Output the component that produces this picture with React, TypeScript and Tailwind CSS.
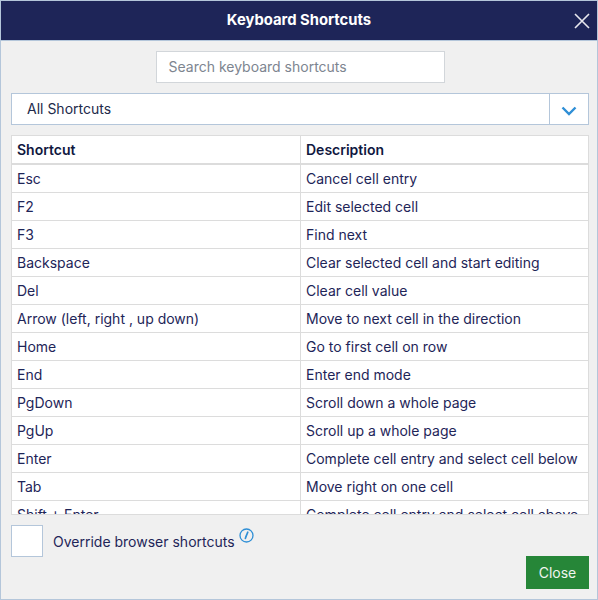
import React from "react";

const rows: [string, string][] = [
  ["Esc", "Cancel cell entry"],
  ["F2", "Edit selected cell"],
  ["F3", "Find next"],
  ["Backspace", "Clear selected cell and start editing"],
  ["Del", "Clear cell value"],
  ["Arrow (left, right , up down)", "Move to next cell in the direction"],
  ["Home", "Go to first cell on row"],
  ["End", "Enter end mode"],
  ["PgDown", "Scroll down a whole page"],
  ["PgUp", "Scroll up a whole page"],
  ["Enter", "Complete cell entry and select cell below"],
  ["Tab", "Move right on one cell"],
  ["Shift + Enter", "Complete cell entry and select cell above"],
];

export default function App() {
  return (
    <div className="w-[598px] h-[600px] flex flex-col bg-[#f0f0f0] border border-[#b4c6da] font-['Inter',sans-serif] text-sm text-[#1e2558] overflow-hidden">
      <div className="h-[40px] shrink-0 bg-[#1e2558] relative flex items-center justify-center border-b border-[#b4c6da]">
        <span className="font-bold text-white text-[14.8px]">Keyboard Shortcuts</span>
        <svg className="absolute right-[7px] top-[12px]" width="16" height="16" viewBox="0 0 16 16" fill="none" stroke="#e8e8ee" strokeWidth="1.6">
          <path d="M1 1l14 14M15 1L1 15" />
        </svg>
      </div>

      <div className="flex-1 flex flex-col pl-[10px] pr-[8px] pt-[10px]">
        <div className="self-center w-[289px] h-[32px] bg-white border border-[#d2d6da] flex items-center pl-[12px] text-[#7d8590]">
          Search keyboard shortcuts
        </div>

        <div className="mt-[10px] h-[32px] w-[578px] flex bg-white border border-[#b4c6da]">
          <div className="flex-1 flex items-center pl-[15px] text-[#222a4a]">All Shortcuts</div>
          <div className="w-[39px] border-l border-[#b4c6da] flex items-center justify-center">
            <svg width="16" height="10" viewBox="0 0 16 10" fill="none" stroke="#2f8fd6" strokeWidth="2.4" className="mt-[3px]">
              <path d="M1.5 1.5L8 8l6.5-6.5" />
            </svg>
          </div>
        </div>

        <div className="mt-[10px] h-[380px] w-[578px] bg-white border border-[#dcdcdc] overflow-hidden">
          <div className="h-[29px] flex items-center border-b-2 border-[#dcdcdc] font-semibold text-[#10183f]">
            <div className="w-[289px] h-full flex items-center pl-[5px] border-r border-[#dcdcdc]">Shortcut</div>
            <div className="flex-1 pl-[5px]">Description</div>
          </div>
          {rows.map(([key, desc]) => (
            <div key={key} className="h-[28px] flex border-b border-[#dcdcdc] shrink-0">
              <div className="w-[289px] h-full flex items-center pl-[5px] border-r border-[#dcdcdc] whitespace-nowrap">{key}</div>
              <div className="flex-1 flex items-center pl-[5px] whitespace-nowrap">{desc}</div>
            </div>
          ))}
        </div>

        <div className="mt-[10px] flex items-start">
          <div className="w-[32px] h-[32px] bg-white border border-[#b4c6da]" />
          <span className="ml-[10px] mt-[7px]">Override browser shortcuts</span>
          <svg className="ml-[4px] mt-[3px]" width="15" height="15" viewBox="0 0 15 15" fill="none" stroke="#2f8fd6">
            <circle cx="7.5" cy="7.5" r="6.5" strokeWidth="1.3" />
            <path d="M8.8 4.2C8 6 7 8 6.4 10.4" strokeWidth="1.7" strokeLinecap="round" />
          </svg>
        </div>

        <div className="flex justify-end -mt-[1px]">
          <button className="w-[63px] h-[33px] bg-[#268638] text-[#f0f5f0]">Close</button>
        </div>
      </div>
    </div>
  );
}
